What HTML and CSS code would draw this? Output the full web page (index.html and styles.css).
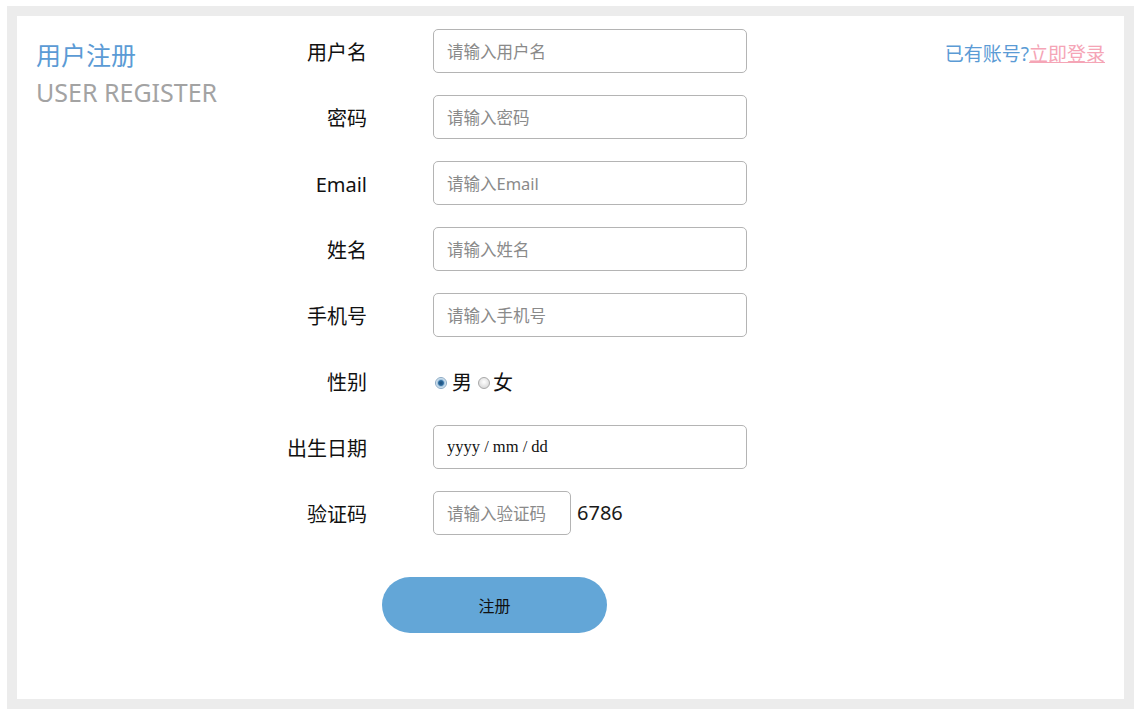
FILE: index.html
```html
<!DOCTYPE html>
<html lang="zh-CN">
<head>
<meta charset="utf-8">
<title>用户注册</title>
<link rel="stylesheet" href="styles.css">
</head>
<body>
<div class="frame">
  <div class="header">
    <div class="title-cn">用户注册</div>
    <div class="title-en">USER REGISTER</div>
  </div>
  <form class="form">
    <label class="label">用户名</label>
    <input class="field" type="text" placeholder="请输入用户名">
    <label class="label">密码</label>
    <input class="field" type="password" placeholder="请输入密码">
    <label class="label">Email</label>
    <input class="field" type="text" placeholder="请输入Email">
    <label class="label">姓名</label>
    <input class="field" type="text" placeholder="请输入姓名">
    <label class="label">手机号</label>
    <input class="field" type="text" placeholder="请输入手机号">
    <label class="label">性别</label>
    <div class="radios">
      <input class="radio" type="radio" name="sex" checked><span class="radio-text">男</span>
      <input class="radio" type="radio" name="sex"><span class="radio-text">女</span>
    </div>
    <label class="label">出生日期</label>
    <input class="field date" type="text" placeholder="yyyy / mm / dd">
    <label class="label">验证码</label>
    <div class="captcha-row">
      <input class="field captcha" type="text" placeholder="请输入验证码">
      <span class="code">6786</span>
    </div>
    <div class="btn-row">
      <button class="btn" type="button">注册</button>
    </div>
  </form>
  <div class="login">已有账号?<a class="login-link" href="#">立即登录</a></div>
</div>
</body>
</html>
```
FILE: styles.css
```css
html, body {
  margin: 0;
  padding: 0;
  background: #fff;
}
body {
  font-family: "Noto Sans", "Noto Sans CJK SC", sans-serif;
  color: #111;
}
.frame {
  box-sizing: border-box;
  margin: 6px 0 0 7px;
  width: 1127px;
  height: 703px;
  border: 10px solid #ececec;
  display: flex;
  align-items: flex-start;
  padding: 13px 19px 0 19px;
}
.header {
  width: 231px;
  flex: none;
  padding-top: 11px;
}
.title-cn {
  font-size: 25px;
  line-height: 30px;
  color: #5b9bd5;
}
.title-en {
  font-size: 25px;
  line-height: 30px;
  color: #a3a3a3;
  margin-top: 7px;
}
.form {
  display: grid;
  grid-template-columns: 100px 314px;
  grid-template-rows: repeat(8, 44px) auto;
  column-gap: 66px;
  row-gap: 22px;
  align-items: center;
}
.label {
  text-align: right;
  font-size: 20px;
  line-height: 28px;
  padding-top: 3px;
  color: #111;
}
.field {
  box-sizing: border-box;
  height: 44px;
  width: 314px;
  border: 1px solid #b4b4b4;
  border-radius: 5px;
  padding: 0 13px;
  font-family: "Noto Sans", "Noto Sans CJK SC", sans-serif;
  font-size: 16.5px;
  color: #333;
  outline: none;
  background: #fff;
}
.field::placeholder {
  color: #8a8a8a;
}
.date {
  font-family: "Liberation Serif", serif;
}
.date::placeholder {
  color: #111;
  font-family: "Liberation Serif", serif;
}
.radios {
  display: flex;
  align-items: center;
  padding-top: 3px;
}
.radio {
  appearance: none;
  -webkit-appearance: none;
  margin: 0 3px 0 2px;
  width: 12px;
  height: 12px;
  border-radius: 50%;
  border: 1px solid #a8a8a8;
  background: radial-gradient(circle at 50% 40%, #ffffff 0, #e2e2e2 60%, #cfcfcf 100%);
  box-sizing: border-box;
}
.radio:checked {
  border-color: #8aa9c4;
  background: radial-gradient(circle, #1f4e78 0, #2c6a9e 2.4px, #9fc2dd 3.4px, #e4eef6 5px);
}
.radio-text {
  font-size: 20px;
  line-height: 28px;
  margin-right: 4px;
}
.radio:first-child + .radio-text {
  margin-left: 2px;
}
.captcha-row {
  display: flex;
  align-items: center;
  gap: 6px;
}
.captcha {
  width: 138px;
}
.code {
  font-size: 20px;
  line-height: 28px;
  color: #1a1a1a;
}
.btn-row {
  grid-column: 1 / -1;
  align-self: start;
  padding-left: 115px;
  margin-top: 20px;
  height: 56px;
}
.btn {
  width: 225px;
  height: 56px;
  border: none;
  border-radius: 28px;
  background: #63a6d7;
  font-family: "Noto Sans", "Noto Sans CJK SC", sans-serif;
  font-size: 16px;
  color: #111;
  cursor: pointer;
}
.login {
  margin-left: auto;
  padding-top: 11px;
  font-size: 19px;
  line-height: 28px;
  color: #5b9bd5;
}
.login-link {
  color: #f5a5b6;
  text-decoration: underline;
}
```
